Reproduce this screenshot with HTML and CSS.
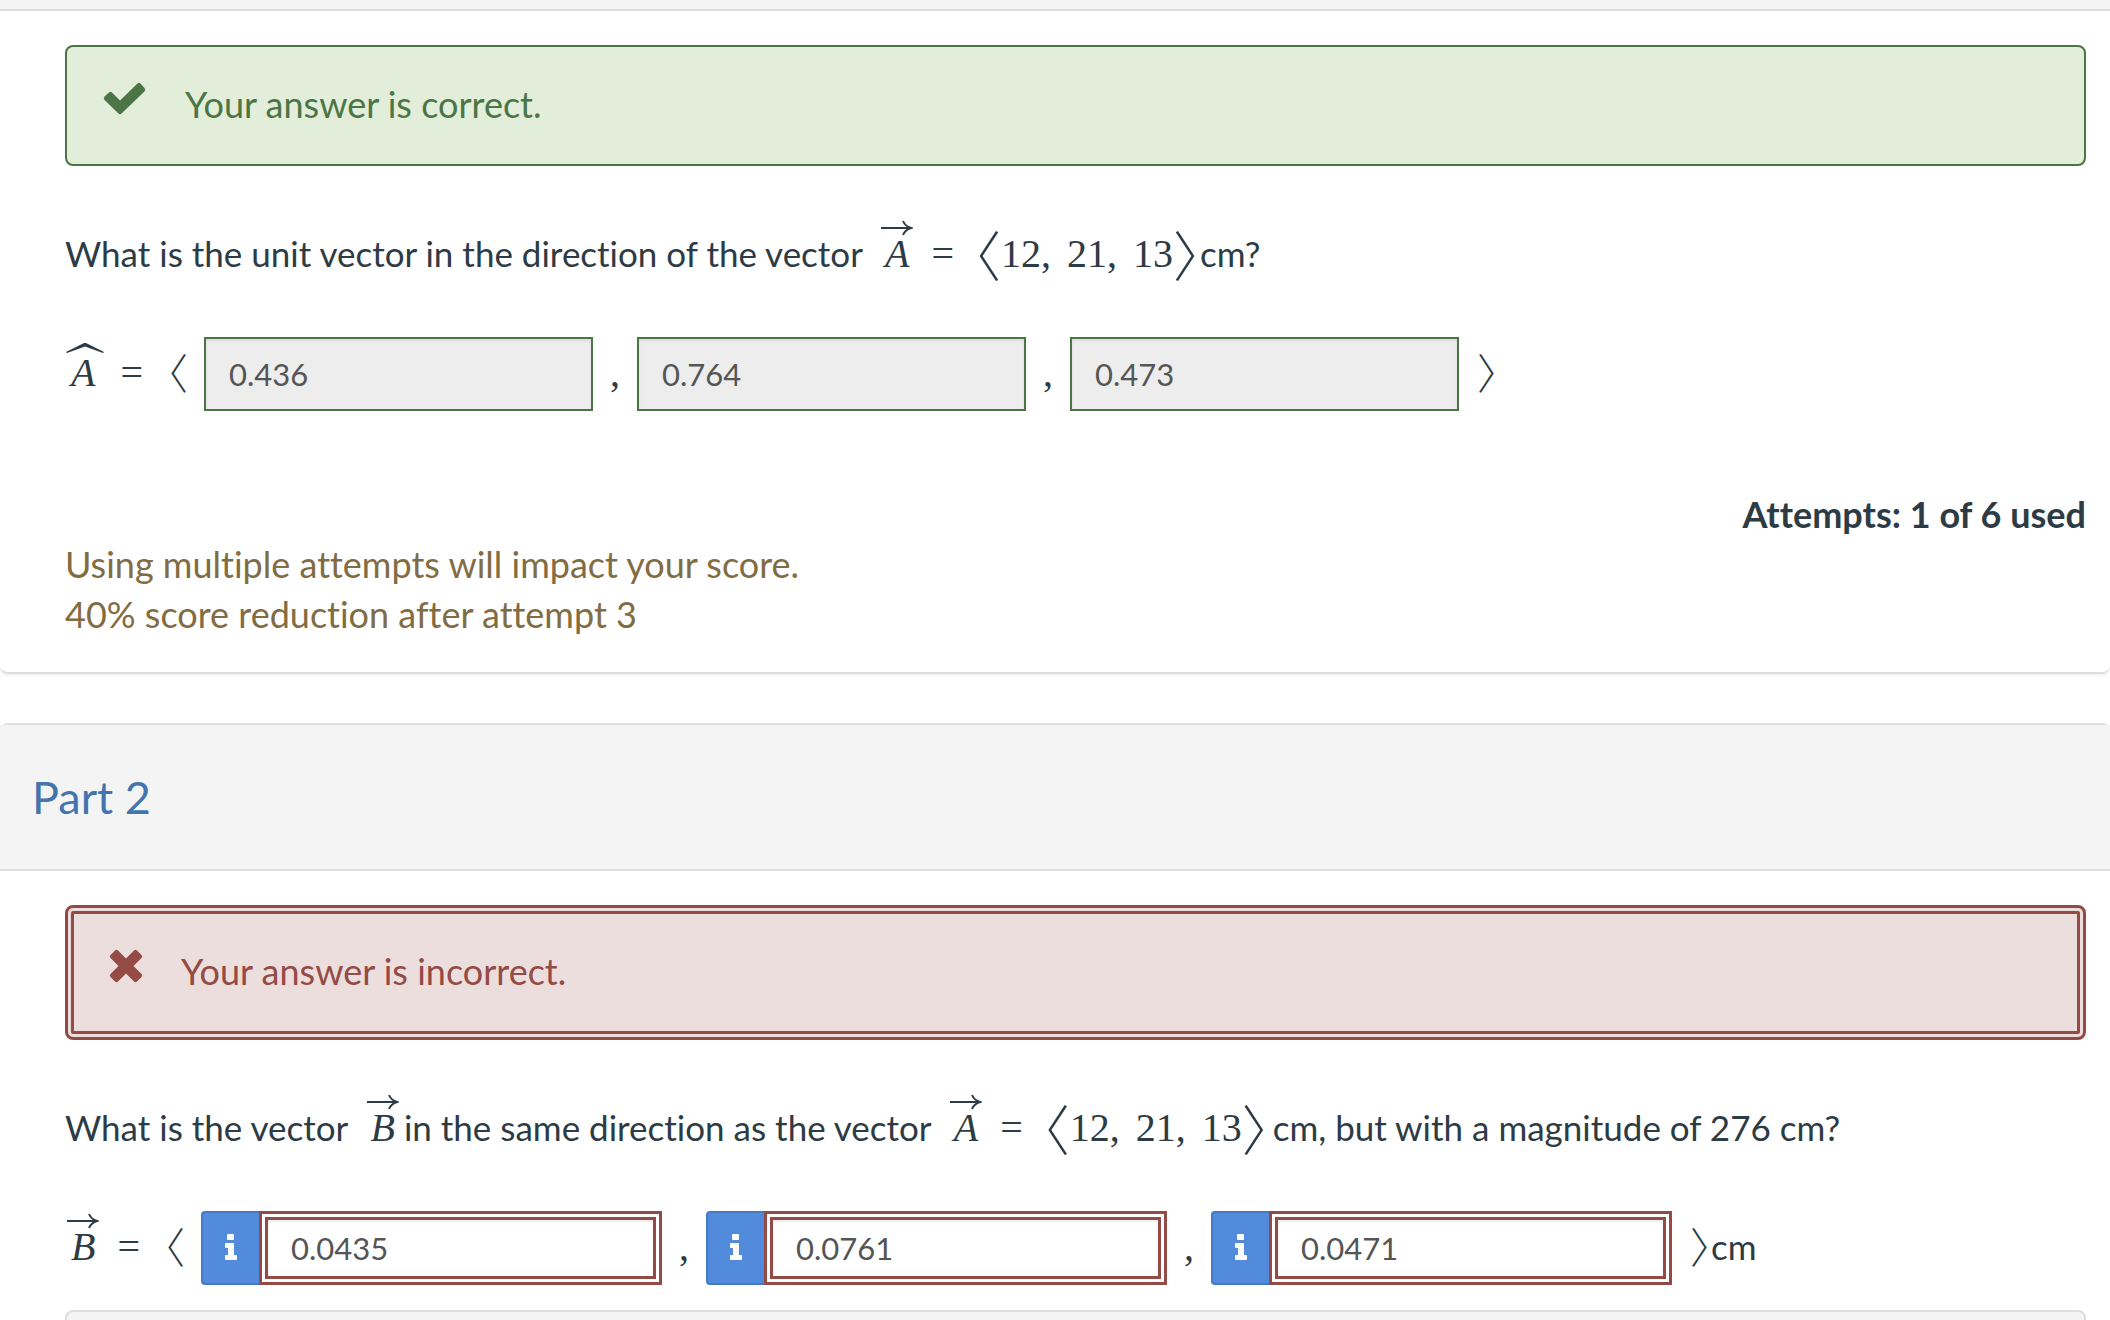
FILE: index.html
```html
<!DOCTYPE html>
<html lang="en">
<head>
<meta charset="utf-8">
<title>Unit vectors</title>
<link rel="stylesheet" href="styles.css">
</head>
<body>
<main>
  <section class="part part-first">
    <header class="part-header part-header-slim"></header>
    <div class="part-body">
      <div class="alert alert-success">
        <svg class="alert-icon" viewBox="0 0 44 34" aria-hidden="true"><path d="M1.500 18Q0 16 1.500 14.500L6 10.500Q7.500 9 9 10.500L17 18.500L34.500 1.500Q36 0 37.500 1.500L41.500 6Q43 8 41.500 9.500L18.500 31.500Q17 33 15.500 31.500Z"/></svg>
        <span>Your answer is correct.</span>
      </div>
      <p class="question">What is the unit vector in the direction of the vector
        <span class="math lead"><span class="vec">A<svg class="arrow" viewBox="0 0 32 16" aria-hidden="true"><path d="M0 8H30M22 1Q24 6 30 8Q24 10 22 15"/></svg></span><span class="eq">=</span><span class="angle tall">〈</span><span class="tuple"><span>12,</span><span>21,</span><span>13</span></span><span class="angle tall">〉</span></span><span class="unit">cm?</span></p>
      <div class="answer">
        <span class="math open"><span class="vec first hatted">A<svg class="hat" viewBox="0 0 38 10" aria-hidden="true"><path d="M0 9L18 0H20L38 9L37 10L19 3.500L1 10Z"/></svg></span><span class="eq">=</span><span class="angle">〈</span></span>
        <input class="value value-correct" type="text" value="0.436" aria-label="A hat, first component" readonly>
        <span class="math comma">,</span>
        <input class="value value-correct" type="text" value="0.764" aria-label="A hat, second component" readonly>
        <span class="math comma">,</span>
        <input class="value value-correct" type="text" value="0.473" aria-label="A hat, third component" readonly>
        <span class="math close"><span class="angle">〉</span></span>
      </div>
      <p class="attempts">Attempts: 1 of 6 used</p>
      <p class="warning">Using multiple attempts will impact your score.<br>40% score reduction after attempt 3</p>
    </div>
  </section>

  <section class="part">
    <header class="part-header"><h2>Part 2</h2></header>
    <div class="part-body">
      <div class="alert alert-error">
        <svg class="alert-icon" viewBox="0 0 34 34" aria-hidden="true"><path d="M6 1.500Q7.500 0 9 1.500L17 9.500L25 1.500Q26.500 0 28 1.500L32.500 6Q34 7.500 32.500 9L24.500 17L32.500 25Q34 26.500 32.500 28L28 32.500Q26.500 34 25 32.500L17 24.500L9 32.500Q7.500 34 6 32.500L1.500 28Q0 26.500 1.500 25L9.500 17L1.500 9Q0 7.500 1.500 6Z"/></svg>
        <span>Your answer is incorrect.</span>
      </div>
      <p class="question">What is the vector
        <span class="math lead"><span class="vec">B<svg class="arrow" viewBox="0 0 32 16" aria-hidden="true"><path d="M0 8H30M22 1Q24 6 30 8Q24 10 22 15"/></svg></span></span>
        in the same direction as the vector
        <span class="math lead"><span class="vec">A<svg class="arrow" viewBox="0 0 32 16" aria-hidden="true"><path d="M0 8H30M22 1Q24 6 30 8Q24 10 22 15"/></svg></span><span class="eq">=</span><span class="angle tall">〈</span><span class="tuple"><span>12,</span><span>21,</span><span>13</span></span><span class="angle tall">〉</span></span><span class="unit unit-wide">cm, but with a magnitude of 276 cm?</span></p>
      <div class="answer">
        <span class="math open"><span class="vec first">B<svg class="arrow" viewBox="0 0 32 16" aria-hidden="true"><path d="M0 8H30M22 1Q24 6 30 8Q24 10 22 15"/></svg></span><span class="eq">=</span><span class="angle">〈</span></span>
        <div class="field">
          <button class="info" type="button" aria-label="Feedback"><svg viewBox="0 0 12 26" aria-hidden="true"><path d="M3 0H8Q9 0 9 1V5Q9 6 8 6H3Q2 6 2 5V1Q2 0 3 0ZM1 9H8Q9 9 9 10V21H11Q12 21 12 22V25Q12 26 11 26H1Q0 26 0 25V22Q0 21 1 21H3V14H1Q0 14 0 13V10Q0 9 1 9Z"/></svg></button>
          <input class="value value-wrong" type="text" value="0.0435" aria-label="B, first component">
        </div>
        <span class="math comma">,</span>
        <div class="field">
          <button class="info" type="button" aria-label="Feedback"><svg viewBox="0 0 12 26" aria-hidden="true"><path d="M3 0H8Q9 0 9 1V5Q9 6 8 6H3Q2 6 2 5V1Q2 0 3 0ZM1 9H8Q9 9 9 10V21H11Q12 21 12 22V25Q12 26 11 26H1Q0 26 0 25V22Q0 21 1 21H3V14H1Q0 14 0 13V10Q0 9 1 9Z"/></svg></button>
          <input class="value value-wrong" type="text" value="0.0761" aria-label="B, second component">
        </div>
        <span class="math comma">,</span>
        <div class="field">
          <button class="info" type="button" aria-label="Feedback"><svg viewBox="0 0 12 26" aria-hidden="true"><path d="M3 0H8Q9 0 9 1V5Q9 6 8 6H3Q2 6 2 5V1Q2 0 3 0ZM1 9H8Q9 9 9 10V21H11Q12 21 12 22V25Q12 26 11 26H1Q0 26 0 25V22Q0 21 1 21H3V14H1Q0 14 0 13V10Q0 9 1 9Z"/></svg></button>
          <input class="value value-wrong" type="text" value="0.0471" aria-label="B, third component">
        </div>
        <span class="math close"><span class="angle">〉</span></span><span class="unit">cm</span>
      </div>
      <div class="help-panel"></div>
    </div>
  </section>
</main>
</body>
</html>
```
FILE: styles.css
```css
* { box-sizing: border-box; }

body {
  margin: 0;
  overflow: hidden;
  background: #fff;
  color: #2d3b45;
  font-family: Lato, "Liberation Sans", sans-serif;
  font-size: 35px;
  font-variant-ligatures: none;
  line-height: 50px;
}

p, h2 { margin: 0; }

.part {
  margin-bottom: 49px;
  border-top: 2px solid #ddd;
  border-bottom: 2px solid #ddd;
  border-radius: 8px;
  box-shadow: 0 2px 2px rgba(0, 0, 0, .05);
}

.part-first { border-top: 0; }

.part-header {
  padding: 47px 32px;
  border-bottom: 2px solid #ddd;
  background: #f4f4f4;
}

.part-header-slim { padding: 9px 0 0; }

.part-header h2 {
  color: #4374ad;
  font-size: 45px;
  font-weight: 400;
  line-height: 50px;
}

.part-body { padding: 34px 24px 33px 65px; }

.alert {
  display: flex;
  align-items: flex-start;
  padding: 32px 36px 35px;
  border: 2px solid;
  border-radius: 8px;
  font-size: 36px;
}

.alert-success {
  background: #e2eed9;
  color: #4c7546;
}

.alert-error {
  padding-left: 35px;
  border: 9px double #954b45;
  background: #ecdedd;
  color: #954b45;
}

.alert-icon {
  flex: none;
  height: 34px;
  margin-top: 3px;
  margin-right: 38px;
  fill: currentColor;
}

.question { margin-top: 62px; }

.math {
  font-family: "Liberation Serif", serif;
  font-size: 40px;
  line-height: 50px;
}

.lead { margin-left: 14px; }

.vec {
  display: inline-block;
  position: relative;
  font-style: italic;
}

.first { margin-left: 6px; }

.hatted { margin-right: 3px; }

.arrow {
  position: absolute;
  top: -9px;
  left: -4px;
  width: 32px;
  height: 16px;
  fill: none;
  stroke: currentColor;
  stroke-width: 2;
}

.hat {
  position: absolute;
  top: -5px;
  left: -5px;
  width: 38px;
  height: 10px;
  fill: currentColor;
}

.eq { margin: 0 20px 0 22px; }

.answer .eq { margin-right: 24px; }

.angle {
  font-family: "Noto Sans CJK JP", sans-serif;
  font-size: 42px;
  font-weight: 300;
  font-feature-settings: "halt";
  line-height: 1px;
  vertical-align: -3px;
}

.tall {
  font-size: 54px;
  vertical-align: -10px;
}

.tuple { display: inline-flex; gap: 16px; }

.unit-wide { margin-left: 4px; }

.answer {
  display: flex;
  align-items: baseline;
  margin-top: 58px;
}

.value {
  height: 74px;
  padding: 0 23px;
  border: 2px solid;
  border-radius: 0;
  color: #555;
  font-family: inherit;
  font-size: 31px;
  box-shadow: inset 0 2px 3px rgba(0, 0, 0, .08);
}

.value-correct {
  width: 389px;
  border-color: #4c7546;
  background: #ededed;
}

.value-wrong {
  width: 403px;
  border: 9px double #954b45;
  background: #fff;
}

.open { margin-right: 16px; }

.comma { width: 44px; text-align: center; }

.close { margin-left: 18px; }

.field { display: flex; align-items: baseline; }

.info {
  align-self: stretch;
  width: 58px;
  padding: 0;
  border: 2px solid #447bc4;
  border-right: 0;
  border-radius: 4px 0 0 4px;
  background: #528bdc;
  color: #fff;
}

.info svg { width: 12px; height: 26px; fill: currentColor; }

.attempts {
  margin-top: 78px;
  font-size: 36px;
  font-weight: 700;
  text-align: right;
}

.warning {
  color: #826c43;
  font-size: 36px;
}

.help-panel {
  height: 80px;
  margin-top: 25px;
  border: 2px solid #ddd;
  border-radius: 8px;
  background: #f4f4f4;
}
```
